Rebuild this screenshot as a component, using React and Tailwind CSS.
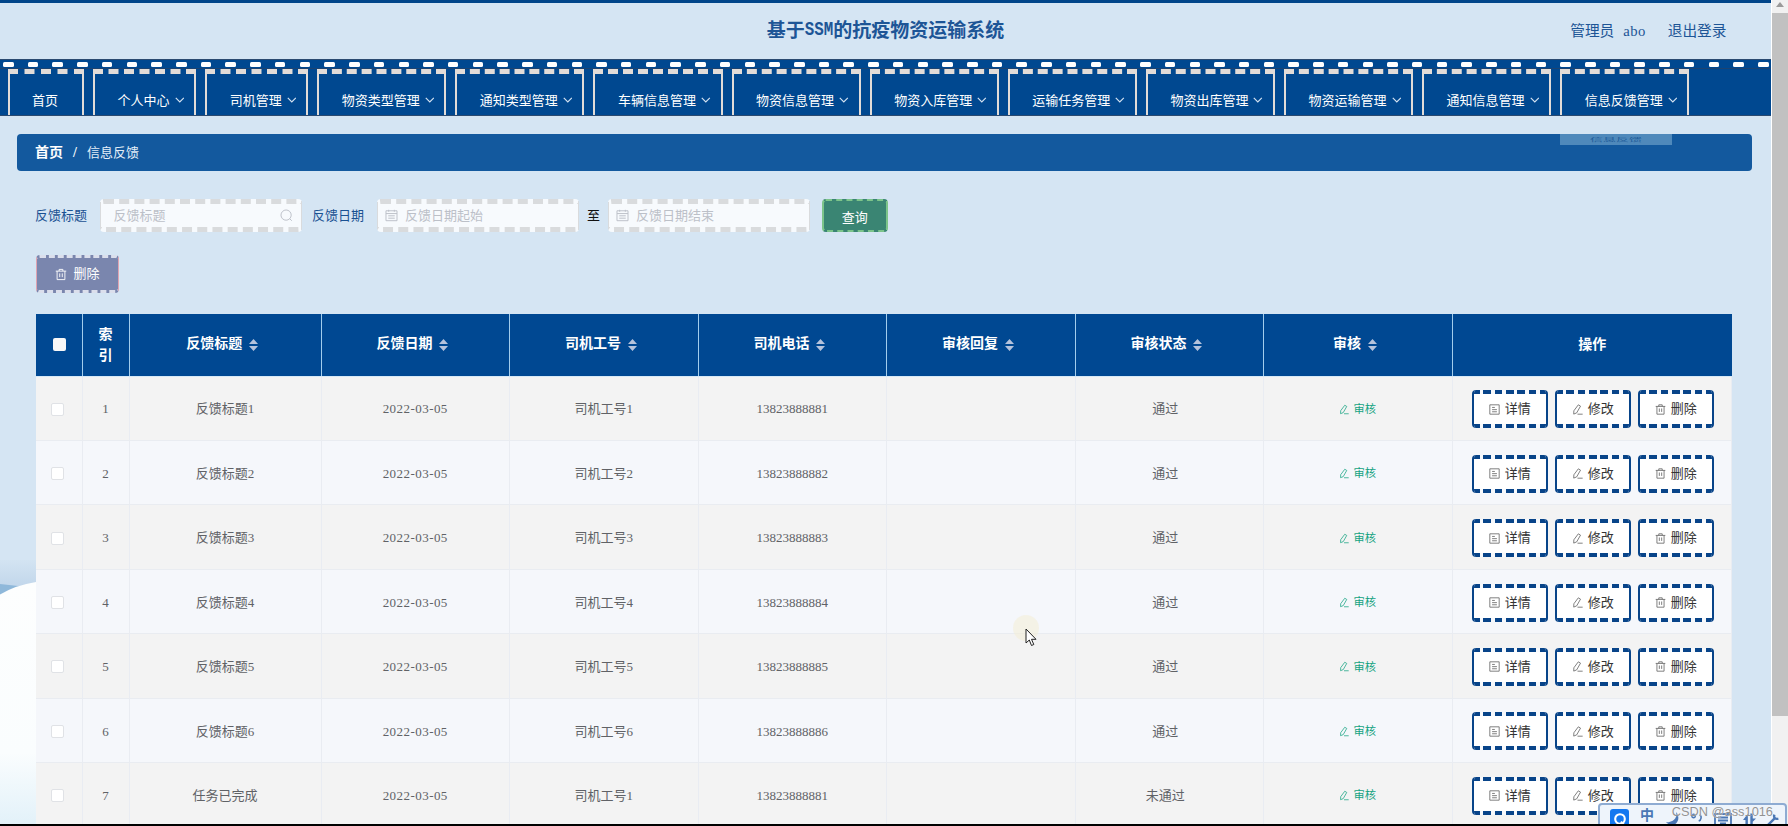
const menus = [
  "首页",
  "个人中心",
  "司机管理",
  "物资类型管理",
  "通知类型管理",
  "车辆信息管理",
  "物资信息管理",
  "物资入库管理",
  "运输任务管理",
  "物资出库管理",
  "物资运输管理",
  "通知信息管理",
  "信息反馈管理",
];

const columns = ["反馈标题", "反馈日期", "司机工号", "司机电话", "审核回复", "审核状态", "审核"];

const rows = [
  { id: 1, title: "反馈标题1", date: "2022-03-05", driver: "司机工号1", phone: "13823888881", reply: "", status: "通过" },
  { id: 2, title: "反馈标题2", date: "2022-03-05", driver: "司机工号2", phone: "13823888882", reply: "", status: "通过" },
  { id: 3, title: "反馈标题3", date: "2022-03-05", driver: "司机工号3", phone: "13823888883", reply: "", status: "通过" },
  { id: 4, title: "反馈标题4", date: "2022-03-05", driver: "司机工号4", phone: "13823888884", reply: "", status: "通过" },
  { id: 5, title: "反馈标题5", date: "2022-03-05", driver: "司机工号5", phone: "13823888885", reply: "", status: "通过" },
  { id: 6, title: "反馈标题6", date: "2022-03-05", driver: "司机工号6", phone: "13823888886", reply: "", status: "通过" },
  { id: 7, title: "任务已完成", date: "2022-03-05", driver: "司机工号1", phone: "13823888881", reply: "", status: "未通过" },
];

const grid = "grid grid-cols-[46.5px_47px_192px_repeat(6,188.5px)_279.5px]";

const Svg = ({ className, children }) => (
  <svg viewBox="0 0 16 16" fill="none" stroke="currentColor" strokeWidth="1.2" className={className}>
    {children}
  </svg>
);

const TrashIcon = ({ className }) => (
  <Svg className={className}>
    <path d="M1 3.5h14M5.5 3.5V1.2h5v2.3M2.8 3.5v11.3h10.4V3.5M6.3 6.5v5M9.7 6.5v5" />
  </Svg>
);

const EditIcon = ({ className }) => (
  <Svg className={className}>
    <path d="M9.2 1.200l3.200 1.900-5.600 9.800-4.300 1.800.2-4.800zM8 14.800h7.500" />
  </Svg>
);

const DocIcon = ({ className }) => (
  <Svg className={className}>
    <path d="M1.2 1.200h13.600v13.600H1.200zM4.500 5h4M4.500 8.200h7M4.500 11.300h7" />
  </Svg>
);

const CalendarIcon = ({ className }) => (
  <Svg className={className}>
    <path d="M1.2 2.2h13.600v12.200H1.200zM1.200 5.600h13.600M4.500 1v2.400M11.500 1v2.400M4 8.400h8M4 11.300h8" />
  </Svg>
);

const DateInput = ({ placeholder }) => (
  <div className="flex h-[33px] w-[202px] items-center gap-[7px] rounded-[4px] border-x border-y-[5px] border-[#d9dbdd] bg-[#f7fafd] pl-[7px] text-[#bcc0c8] [border-style:dashed_solid]">
    <CalendarIcon className="h-[13px] w-[13px]" />
    <span>{placeholder}</span>
  </div>
);

const ActionButton = ({ icon, children }) => (
  <button className="relative flex h-[38px] w-[76px] flex-col justify-between overflow-hidden rounded-[4px] border-x-2 border-[#084489] bg-white text-[13px] text-[#333]">
    <span className="h-[4px] w-full bg-[repeating-linear-gradient(90deg,#084489_0_5.700px,#f7f9fc_5.700px_9.400px,#084489_9.400px_11.300px)]"></span>
    <span className="flex items-center justify-center gap-[5px] self-center">
      {icon}
      {children}
    </span>
    <span className="h-[4px] w-full bg-[repeating-linear-gradient(90deg,#084489_0_5.700px,#f7f9fc_5.700px_9.400px,#084489_9.400px_11.300px)]"></span>
  </button>
);

const Header = () => (
  <header className="grid h-[56px] grid-cols-3 items-center text-[#1d5596]">
    <div></div>
    <h1 className="flex items-center justify-center text-[19px] font-bold whitespace-nowrap">
      基于
      <span className="inline-block scale-y-[1.3] font-['Liberation_Mono',monospace] text-[15.8px]">SSM</span>
      的抗疫物资运输系统
    </h1>
    <div className="flex items-center justify-end pr-[44.5px] text-[14.7px]">
      <span>管理员</span>
      <span className="ml-[9px] tracking-[0.4px]">abo</span>
      <span className="ml-[22px]">退出登录</span>
    </div>
  </header>
);

const Nav = () => (
  <nav className="h-[57px] border-y border-[#2b4a70] bg-[#004890]">
    <div className="flex h-[8px] items-center justify-between pr-[2px] pl-[3px]">
      {Array.from({ length: 72 }, (_, i) => (
        <span key={i} className="h-[5px] w-[10.5px] rounded-[1.5px] bg-white"></span>
      ))}
    </div>
    <ul className="flex h-[47px] gap-[9px] border-t border-[#1c4371] pl-[7.5px]">
      {menus.map((name, i) => (
        <li
          key={name}
          className="flex items-start border-x-2 border-t-[5px] border-[#e2dcd8] pt-[17px] pr-[10px] pl-[22.5px] text-[13px] leading-[20px] text-white [border-style:dashed_solid_none]"
        >
          {name}
          {i > 0 ? (
            <svg viewBox="0 0 10 6" fill="none" stroke="#d5e3f2" strokeWidth="1.2" className="mt-[6px] ml-[5px] h-[6px] w-[9.6px]">
              <path d="M0.8 0.8L5 5l4.2-4.2" />
            </svg>
          ) : (
            <span className="w-[14px]"></span>
          )}
        </li>
      ))}
    </ul>
  </nav>
);

const ImeBar = () => (
  <div className="absolute right-[1px] bottom-[-8px] flex h-[31px] w-[189px] items-start gap-[11px] rounded-[4px] border-2 border-[#8eabd2] bg-[#eef4fb] pt-[4px] pl-[10px] text-[#4a77b5]">
    <span className="flex h-[20px] w-[19px] shrink-0 items-center justify-center rounded-[3px] bg-[#1478f0]">
      <svg viewBox="0 0 16 16" fill="none" stroke="#fff" strokeWidth="2.4" className="h-[14px] w-[14px]">
        <circle cx="8" cy="8" r="5.5" />
        <path d="M9 11l4 4" />
      </svg>
    </span>
    <span className="text-[14px] leading-[14px] font-bold">中</span>
    <svg viewBox="0 0 16 16" fill="currentColor" className="mt-[2px] h-[15px] w-[15px]">
      <path d="M12 1c1 7-3 11-11 11 3 3 8 4 11 1s3-8 0-12z" />
    </svg>
    <svg viewBox="0 0 14 14" fill="none" stroke="currentColor" strokeWidth="1.8" className="mt-[3px] h-[13px] w-[12px]">
      <circle cx="3" cy="4" r="2" />
      <path d="M10 3c3 1 2 6-1 7" />
    </svg>
    <svg viewBox="0 0 18 14" fill="none" stroke="currentColor" strokeWidth="1.8" className="mt-[4px] h-[14px] w-[18px]">
      <path d="M1 1h16v12H1zM4 4.500h10M4 7.500h10M6 10.500h6" />
    </svg>
    <svg viewBox="0 0 16 16" fill="currentColor" className="mt-[4px] h-[14px] w-[13px]">
      <path d="M6 0v16H3V8H0l3-4zM9 0h3v6h4l-4 4v6H9z" />
    </svg>
    <svg viewBox="0 0 16 16" fill="none" stroke="currentColor" strokeWidth="3" className="mt-[3px] h-[15px] w-[13px]">
      <path d="M1 15L10 6M9 2c-1 4 1 6 5 5" />
    </svg>
  </div>
);

export default function App() {
  return (
    <div className="relative flex h-[826px] w-[1788px] overflow-hidden bg-[#d5e5f3] font-['Liberation_Serif','Noto_Sans_CJK_SC',sans-serif] text-[13px]">
      <svg viewBox="0 0 36 266" className="absolute top-[560px] left-0 h-[266px] w-[36px]">
        <defs>
          <linearGradient id="sky" x1="0" y1="0" x2="0" y2="1">
            <stop offset="0" stopColor="#d3e4f2" />
            <stop offset="1" stopColor="#c2d7eb" />
          </linearGradient>
          <linearGradient id="hill" x1="0" y1="0" x2="0" y2="1">
            <stop offset="0" stopColor="#fdfefe" />
            <stop offset="0.7" stopColor="#fafdfe" />
            <stop offset="1" stopColor="#e2f1f9" />
          </linearGradient>
        </defs>
        <path d="M0 0h36v26H0z" fill="url(#sky)" />
        <path d="M0 24l18 2 10 0-28 10z" fill="#8fb8da" />
        <path d="M0 34.500Q16 25 36 22V266H0z" fill="url(#hill)" />
      </svg>

      <div className="relative w-[1771px] border-t-[3px] border-[#00458a]">
        <Header />
        <Nav />

        <div className="mt-[17.5px] mr-[19px] ml-[16.5px] flex h-[37.5px] items-center rounded-[4px] bg-[#13599e] pl-[18.5px] text-white">
          <span className="text-[14px] font-bold">首页</span>
          <span className="mx-[10px] text-[14px] font-bold">/</span>
          <span className="text-[#e3eef8]">信息反馈</span>
        </div>
        <div className="absolute top-[131px] left-[1560px] flex h-[11px] w-[112px] items-center justify-center bg-[#4f89bb] text-[#1f5c99]">
          <span className="scale-y-[0.35]">信息反馈</span>
        </div>

        <div className="mt-[28px] flex h-[33px] items-center pl-[35px] text-[#1a5192]">
          <span>反馈标题</span>
          <div className="ml-[12.5px] flex h-[33px] w-[202px] items-center justify-between rounded-[4px] border-x border-y-[5px] border-[#d9dbdd] bg-[#f7fafd] pr-[8px] pl-[13px] text-[#bcc0c8] [border-style:dashed_solid]">
            <span>反馈标题</span>
            <Svg className="h-[13px] w-[13px]">
              <circle cx="7.500" cy="7.500" r="6.300" />
              <path d="M12 12l2.500 2.500" />
            </Svg>
          </div>
          <span className="mr-[13px] ml-[10.5px]">反馈日期</span>
          <DateInput placeholder="反馈日期起始" />
          <span className="mx-[8px] text-[#111]">至</span>
          <DateInput placeholder="反馈日期结束" />
          <button className="ml-[12px] h-[33px] w-[65.5px] rounded-[4px] border-2 border-[#7cc48a] bg-[#3a8573] pt-[4px] text-white [border-style:dashed_solid]">
            查询
          </button>
        </div>

        <button className="mt-[23px] ml-[36px] flex h-[38px] w-[83px] items-center justify-center gap-[6px] rounded-[4px] border-x border-y-[3px] border-x-[#dfa3b1] border-y-[#dbdfec] bg-[#7a86ae] text-white [border-style:dashed_solid]">
          <TrashIcon className="h-[13px] w-[12px]" />
          删除
        </button>

        <div className="mt-[21px] ml-[36px] w-[1696px] text-[#606266]">
          <div className={`${grid} h-[62.5px] border-b border-[#d7e9f7] bg-[#004892] text-[14px] font-bold text-white`}>
            <div className="flex items-center justify-center border-r border-[#a3cdec] pl-[2px]">
              <span className="h-[13px] w-[13px] rounded-[2px] bg-[#f8f8f8]"></span>
            </div>
            <div className="flex items-center justify-center border-r border-[#a3cdec]">
              <span className="w-[14px] leading-[21px]">索引</span>
            </div>
            {columns.map((col) => (
              <div key={col} className="flex items-center justify-center gap-[6.5px] border-r border-[#a3cdec] pr-[6px] pb-[2px]">
                {col}
                <svg viewBox="0 0 9 12" fill="#b5c3dc" className="mt-[2px] h-[12px] w-[9px]">
                  <path d="M4.500 0L9 5H0zM4.500 12L0 7h9z" />
                </svg>
              </div>
            ))}
            <div className="flex items-center justify-center">操作</div>
          </div>

          {rows.map((row) => (
            <div
              key={row.id}
              className={`${grid} h-[64.45px] border-b border-[#e9ecf1] odd:bg-[#f5f7fb] even:bg-[#f3f3f3] *:flex *:items-center *:justify-center *:border-r *:border-[#e9ecf2] *:pt-[2px]`}
            >
              <div className="pr-[2px]">
                <span className="h-[13px] w-[13px] rounded-[2px] border border-[#e0e2e6] bg-white"></span>
              </div>
              <div>{row.id}</div>
              <div>{row.title}</div>
              <div className="tracking-[0.45px]">{row.date}</div>
              <div>{row.driver}</div>
              <div>{row.phone}</div>
              <div>{row.reply}</div>
              <div className="pr-[8px]">{row.status}</div>
              <div className="gap-[4px] text-[11.3px] text-[#16a382]">
                <EditIcon className="h-[11px] w-[10px]" />
                审核
              </div>
              <div className="gap-[7px] pl-[2px]">
                <ActionButton icon={<DocIcon className="h-[13px] w-[11px] text-[#666]" />}>详情</ActionButton>
                <ActionButton icon={<EditIcon className="h-[13px] w-[11px] text-[#666]" />}>修改</ActionButton>
                <ActionButton icon={<TrashIcon className="h-[13px] w-[11px] text-[#666]" />}>删除</ActionButton>
              </div>
            </div>
          ))}
        </div>
      </div>

      <div className="flex w-[17px] flex-col border-l border-white bg-[#f1f1f1]">
        <div className="flex h-[13px] justify-center">
          <svg viewBox="0 0 8 5" fill="#9a9a9a" className="mt-[2px] h-[5px] w-[8px]">
            <path d="M4 0l4 5H0z" />
          </svg>
        </div>
        <div className="h-[703px] bg-[#c1c1c1]"></div>
      </div>

      {/* mouse pointer */}
      <div className="absolute top-[615px] left-[1013px] h-[26px] w-[26px] rounded-full bg-[#f3eed8]/60"></div>
      <svg viewBox="0 0 12 19" className="absolute top-[628px] left-[1025px] h-[19px] w-[12px]">
        <path d="M1 1v14l3.300-3 2.200 5.500 2.300-1-2.300-5.200H11z" fill="#fff" stroke="#222" />
      </svg>

      <ImeBar />
      <span className="absolute right-[15px] bottom-[5px] font-['Liberation_Sans',sans-serif] text-[12.8px] leading-[18px] whitespace-nowrap text-[#929292] [text-shadow:0_0_1px_#fff]">
        CSDN @ass1016
      </span>
      <div className="absolute bottom-0 left-0 h-[2px] w-full bg-black"></div>
    </div>
  );
}
